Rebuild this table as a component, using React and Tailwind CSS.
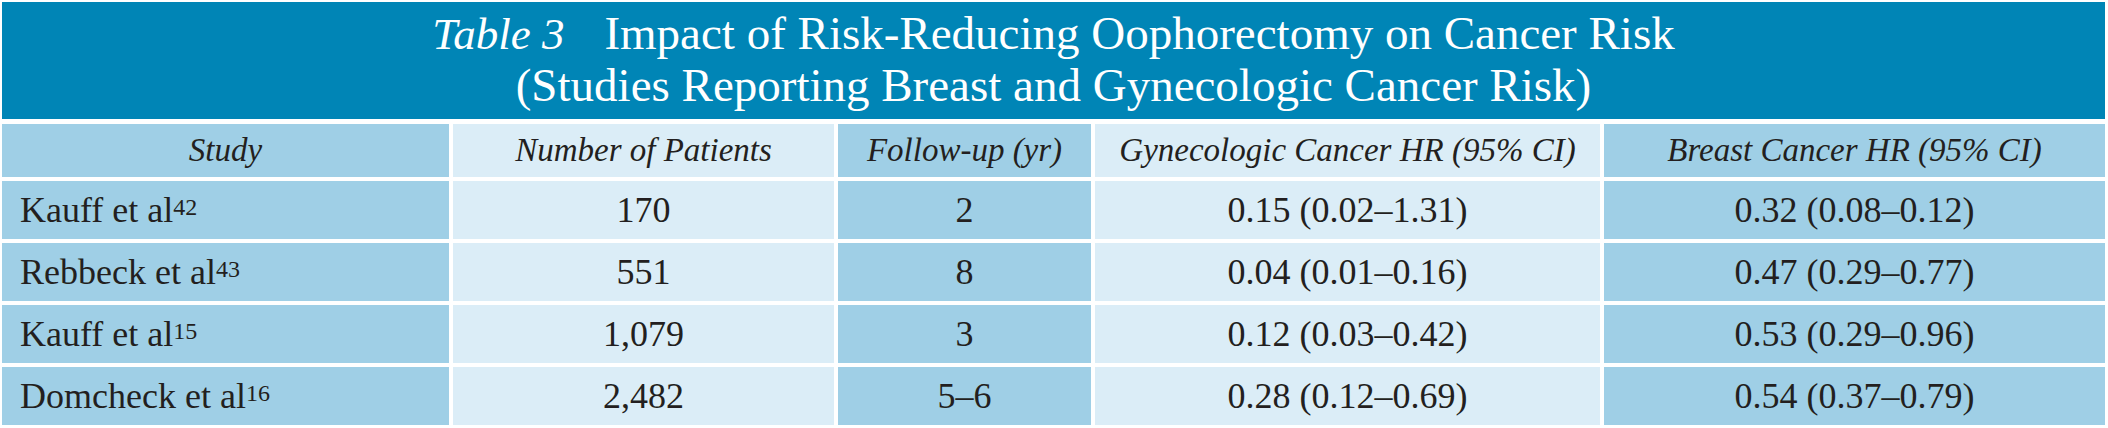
import React from 'react';

const rows = [
  { study: 'Kauff et al', ref: '42', patients: '170', follow: '2', gyn: '0.15 (0.02–1.31)', breast: '0.32 (0.08–0.12)' },
  { study: 'Rebbeck et al', ref: '43', patients: '551', follow: '8', gyn: '0.04 (0.01–0.16)', breast: '0.47 (0.29–0.77)' },
  { study: 'Kauff et al', ref: '15', patients: '1,079', follow: '3', gyn: '0.12 (0.03–0.42)', breast: '0.53 (0.29–0.96)' },
  { study: 'Domcheck et al', ref: '16', patients: '2,482', follow: '5–6', gyn: '0.28 (0.12–0.69)', breast: '0.54 (0.37–0.79)' },
];

const dark = 'bg-[#9fcfe6]';
const light = 'bg-[#dbedf7]';

const headers = [
  { label: 'Study', bg: dark },
  { label: 'Number of Patients', bg: light },
  { label: 'Follow-up (yr)', bg: dark },
  { label: 'Gynecologic Cancer HR (95% CI)', bg: light },
  { label: 'Breast Cancer HR (95% CI)', bg: dark },
];

export default function App() {
  return (
    <div
      className="w-[2108px] h-[428px] bg-white pt-[2px] pl-[2px] text-[#231f20]"
      style={{ fontFamily: '"Liberation Serif", "Times New Roman", serif' }}
    >
      {/* Title banner */}
      <div className="w-[2103px] h-[117px] bg-[#0085b6] text-white text-[47px] leading-[51px] flex flex-col items-center justify-center pb-[2px]">
        <div className="whitespace-nowrap">
          <span className="italic text-[45px] mr-[40px]">Table 3</span>
          Impact of Risk-Reducing Oophorectomy on Cancer Risk
        </div>
        <div className="whitespace-nowrap">(Studies Reporting Breast and Gynecologic Cancer Risk)</div>
      </div>

      {/* Table */}
      <div className="mt-[5px] grid grid-cols-[447px_381px_253px_505px_501px] gap-x-[4px] gap-y-[4px]">
        {headers.map((h) => (
          <div
            key={h.label}
            className={`${h.bg} h-[53px] flex items-center justify-center italic text-[33px] whitespace-nowrap`}
          >
            {h.label}
          </div>
        ))}

        {rows.map((r, i) => (
          <React.Fragment key={i}>
            <div className={`${dark} h-[58px] flex items-center pl-[18px] text-[36px] whitespace-nowrap`}>
              <span>
                {r.study}
                <sup className="text-[24px] -top-[7px]">{r.ref}</sup>
              </span>
            </div>
            <div className={`${light} h-[58px] flex items-center justify-center text-[36px]`}>{r.patients}</div>
            <div className={`${dark} h-[58px] flex items-center justify-center text-[36px]`}>{r.follow}</div>
            <div className={`${light} h-[58px] flex items-center justify-center text-[36px]`}>{r.gyn}</div>
            <div className={`${dark} h-[58px] flex items-center justify-center text-[36px]`}>{r.breast}</div>
          </React.Fragment>
        ))}
      </div>
    </div>
  );
}
